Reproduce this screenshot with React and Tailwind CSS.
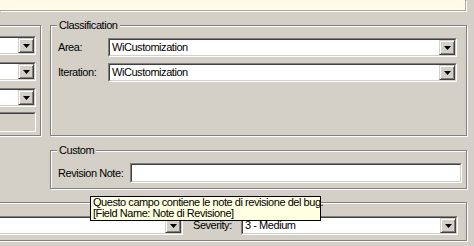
import React from "react";

function Group({ label, className = "", children }) {
  return (
    <div
      className={`relative border border-[#808080] shadow-[inset_1px_1px_0_#fff,1px_1px_0_#fff] ${className}`}
    >
      {label && (
        <span className="absolute left-[6px] top-[-7px] px-[2px] bg-[#d4d0c8] leading-[13px] whitespace-nowrap">
          {label}
        </span>
      )}
      {children}
    </div>
  );
}

function Arrow() {
  return (
    <svg width="7" height="4" viewBox="0 0 7 4" className="block">
      <polygon points="0,0 7,0 3.5,4" fill="#000" />
    </svg>
  );
}

function DropButton() {
  return (
    <div className="ml-auto w-[16px] h-full shrink-0 flex items-center justify-center bg-[#d4d0c8] border border-t-[#d4d0c8] border-l-[#d4d0c8] border-b-[#404040] border-r-[#404040] shadow-[inset_1px_1px_0_#fff,inset_-1px_-1px_0_#808080]">
      <Arrow />
    </div>
  );
}

function Sunken({ className = "", innerClass = "bg-white", children }) {
  return (
    <div
      className={`flex border border-t-[#808080] border-l-[#808080] border-b-white border-r-white ${className}`}
    >
      <div
        className={`flex-1 min-w-0 flex items-center border border-t-[#404040] border-l-[#404040] border-b-[#d4d0c8] border-r-[#d4d0c8] overflow-hidden ${innerClass}`}
      >
        {children}
      </div>
    </div>
  );
}

function Combo({ className = "", text = "" }) {
  return (
    <Sunken className={`h-[19px] ${className}`}>
      <span className="pl-[2px] whitespace-nowrap">{text}</span>
      <DropButton />
    </Sunken>
  );
}

export default function App() {
  return (
    <div
      className="relative w-[474px] h-[246px] overflow-hidden bg-[#d4d0c8] text-black text-[11px] tracking-[-0.45px] leading-[13px]"
      style={{ fontFamily: '"Liberation Sans", Arial, sans-serif' }}
    >
      <div className="h-[11px] w-[466px] bg-[#fffbe8] border-b border-r border-[#aca899] shadow-[1px_1px_0_#fff]" />

      <div className="flex mt-[14px]">
        <Group className="ml-[-10px] w-[51px] h-[111px] shrink-0">
          <div className="flex flex-col pt-[10px] pl-[4px] pr-[4px]">
            <Combo className="w-full" />
            <Combo className="w-full mt-[7px]" />
            <Combo className="w-full mt-[7px]" />
            <Sunken className="w-full h-[20px] mt-[5px]" innerClass="bg-[#d4d0c8]" />
          </div>
        </Group>

        <div className="ml-[9px] w-[417px] shrink-0 flex flex-col">
          <Group label="Classification" className="h-[111px]">
            <div className="flex flex-col pt-[12px] pl-[7px]">
              <div className="flex items-center">
                <span className="w-[50px] shrink-0">Area:</span>
                <Combo className="w-[349px]" text="WiCustomization" />
              </div>
              <div className="flex items-center mt-[6px]">
                <span className="w-[50px] shrink-0">Iteration:</span>
                <Combo className="w-[349px]" text="WiCustomization" />
              </div>
            </div>
          </Group>

          <Group label="Custom" className="mt-[14px] h-[39px]">
            <div className="flex items-center pt-[12px] pl-[7px]">
              <span className="w-[72px] shrink-0">Revision Note:</span>
              <Sunken className="w-[332px] h-[20px]" />
            </div>
          </Group>
        </div>
      </div>

      <Group className="mt-[13px] ml-[-10px] w-[477px] h-[39px]">
        <div className="flex items-center pt-[13px]">
          <Combo className="w-[192px]" />
          <span className="ml-[10px] w-[48px] shrink-0">Severity:</span>
          <Combo className="w-[217px]" text="3 - Medium" />
        </div>
      </Group>

      <div className="absolute left-[90px] top-[196px] w-[231px] h-[25px] bg-[#ffffe1] border border-black pl-[2px] leading-[11px] whitespace-nowrap">
        <div>Questo campo contiene le note di revisione del bug.</div>
        <div>[Field Name: Note di Revisione]</div>
      </div>
    </div>
  );
}
